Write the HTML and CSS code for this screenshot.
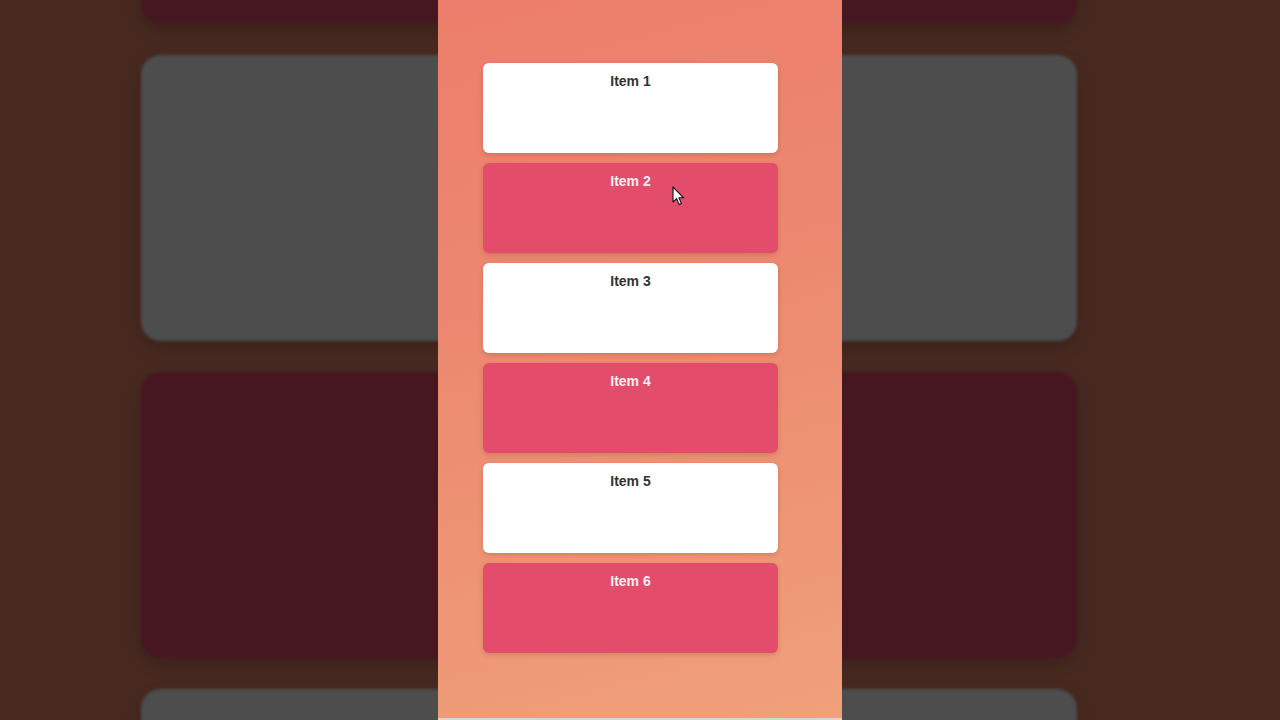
FILE: index.html
```html
<!DOCTYPE html>
<html>
<head>
<meta charset="utf-8">
<link rel="stylesheet" href="styles.css">
</head>
<body>
<div class="stage">
  <div class="backdrop">
    <div class="bcard bred"></div>
    <div class="bcard bgray"></div>
    <div class="bcard bred"></div>
    <div class="bcard bgray"></div>
  </div>
  <div class="phone">
    <div class="list">
      <div class="item light">Item 1</div>
      <div class="item pink">Item 2</div>
      <div class="item light">Item 3</div>
      <div class="item pink">Item 4</div>
      <div class="item light">Item 5</div>
      <div class="item pink">Item 6</div>
    </div>
  </div>
  <svg class="cursor" width="13" height="20" viewBox="0 0 13 20">
    <path d="M1 1 L1 16 L4.6 12.6 L7.2 18.6 L9.4 17.6 L6.9 11.8 L11.6 11.8 Z" fill="#fff" stroke="#111" stroke-width="1.1" stroke-linejoin="round"/>
  </svg>
</div>
</body>
</html>
```
FILE: styles.css
```css
html, body {
  margin: 0;
  padding: 0;
  width: 1280px;
  height: 720px;
  overflow: hidden;
  font-family: "Liberation Sans", Arial, sans-serif;
}
.stage {
  position: relative;
  width: 1280px;
  height: 720px;
  overflow: hidden;
  background: #472920;
}
.backdrop {
  display: flex;
  flex-direction: column;
  align-items: flex-start;
  gap: 31px;
  padding-left: 141px;
  margin-top: -262px;
  filter: blur(1.5px);
}
.bcard {
  flex: none;
  width: 936px;
  height: 286px;
  border-radius: 20px;
  box-shadow: 0 6px 16px rgba(0,0,0,0.18);
}
.bred { background: #461721; }
.bgray { background: #4d4d4d; }
.phone {
  position: absolute;
  left: 438px;
  top: 0;
  width: 404px;
  height: 718px;
  border-bottom: 2px solid #d8d4d2;
  background: linear-gradient(165deg, #ed7d6c 0%, #ec8a70 45%, #f0a07a 100%);
}
.list {
  display: flex;
  flex-direction: column;
  gap: 10px;
  padding: 63px 0 0 45px;
}
.item {
  width: 295px;
  height: 90px;
  box-sizing: border-box;
  padding-top: 10px;
  border-radius: 6px;
  text-align: center;
  font-size: 14px;
  font-weight: bold;
  line-height: 16px;
  box-shadow: 0 2px 5px rgba(120,40,30,0.22);
}
.light { background: #ffffff; color: #333333; }
.pink { background: #e34c6b; color: #fbeef0; }
.cursor {
  position: absolute;
  left: 672px;
  top: 186px;
}
```
